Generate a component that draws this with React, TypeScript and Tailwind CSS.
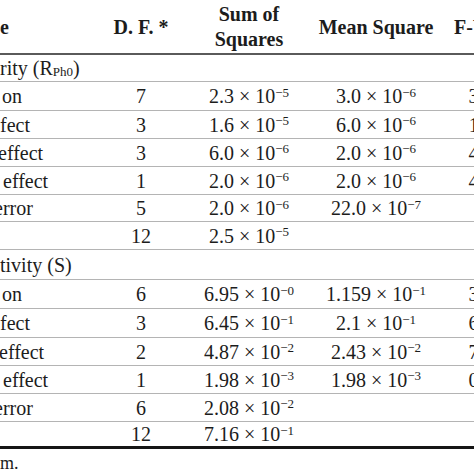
import React from "react";

type Row = {
  label?: string;
  ml?: number;
  h: number;
  df?: string;
  ss?: [string, string];
  ms?: [string, string];
  f?: string;
};

const Sci = ({ v }: { v?: [string, string] }) =>
  v ? (
    <span className="whitespace-nowrap">
      {v[0]} × 10<sup className="text-[13px] top-[-0.5em]">{v[1]}</sup>
    </span>
  ) : null;

const g1: Row[] = [
  { label: "on", ml: 2, h: 29, df: "7", ss: ["2.3", "−5"], ms: ["3.0", "−6"], f: "3.75" },
  { label: "fect", ml: 0, h: 28, df: "3", ss: ["1.6", "−5"], ms: ["6.0", "−6"], f: "11.2" },
  { label: "effect", ml: -2, h: 28, df: "3", ss: ["6.0", "−6"], ms: ["2.0", "−6"], f: "4.00" },
  { label: "effect", ml: 3, h: 28, df: "1", ss: ["2.0", "−6"], ms: ["2.0", "−6"], f: "4.00" },
  { label: "error", ml: -6, h: 27, df: "5", ss: ["2.0", "−6"], ms: ["22.0", "−7"] },
  { h: 28, df: "12", ss: ["2.5", "−5"] },
];

const g2: Row[] = [
  { label: "on", ml: 2, h: 29, df: "6", ss: ["6.95", "−0"], ms: ["1.159", "−1"], f: "3.61" },
  { label: "fect", ml: 0, h: 29, df: "3", ss: ["6.45", "−1"], ms: ["2.1", "−1"], f: "6.53" },
  { label: "effect", ml: -1, h: 28, df: "2", ss: ["4.87", "−2"], ms: ["2.43", "−2"], f: "7.55" },
  { label: "effect", ml: 3, h: 28, df: "1", ss: ["1.98", "−3"], ms: ["1.98", "−3"], f: "0.61" },
  { label: "error", ml: -6, h: 28, df: "6", ss: ["2.08", "−2"] },
  { h: 27, df: "12", ss: ["7.16", "−1"] },
];

const cols = "grid grid-cols-[98px_86px_130px_124px_96px]";

const DataRow = ({ r, last }: { r: Row; last?: boolean }) => (
  <div
    className={`${cols} items-center ${
      last ? "border-b-[3px] border-[#151515]" : "border-b-[1.5px] border-[#b4b4b4]"
    }`}
    style={{ height: r.h }}
  >
    <div className="overflow-hidden whitespace-nowrap">
      {r.label ? <span className="inline-block" style={{ marginLeft: r.ml }}>{r.label}</span> : null}
    </div>
    <div className="text-center">{r.df}</div>
    <div className="text-center">
      <Sci v={r.ss} />
    </div>
    <div className="text-center">
      <Sci v={r.ms} />
    </div>
    <div className="text-center">{r.f}</div>
  </div>
);

const GroupRow = ({ children, h }: { children: React.ReactNode; h: number }) => (
  <div
    className="flex items-center border-b-[1.5px] border-[#b4b4b4] whitespace-nowrap"
    style={{ height: h }}
  >
    {children}
  </div>
);

export default function App() {
  return (
    <div className="w-[474px] h-[474px] overflow-hidden bg-white text-[#1c1c1c] text-[20px] leading-[24px] font-['Liberation_Serif','Times_New_Roman',serif]">
      <div className="w-[534px]">
        <div className={`${cols} h-[55px] items-center font-bold border-b-2 border-[#5a5a5a]`}>
          <div>e</div>
          <div className="text-center">D. F. *</div>
          <div className="text-center leading-[25px]">
            Sum of
            <br />
            Squares
          </div>
          <div className="text-center whitespace-nowrap">Mean Square</div>
          <div className="pl-[16px] whitespace-nowrap">F-Value</div>
        </div>
        <GroupRow h={27}>
          <span>
            rity (R<sub className="text-[13px] bottom-[-0.1em]">Ph0</sub>)
          </span>
        </GroupRow>
        {g1.map((r, i) => (
          <DataRow key={"a" + i} r={r} />
        ))}
        <GroupRow h={30}>
          <span>tivity (S)</span>
        </GroupRow>
        {g2.map((r, i) => (
          <DataRow key={"b" + i} r={r} last={i === g2.length - 1} />
        ))}
        <div className="pt-[3px] text-[18px] leading-[22px]">m.</div>
      </div>
    </div>
  );
}
